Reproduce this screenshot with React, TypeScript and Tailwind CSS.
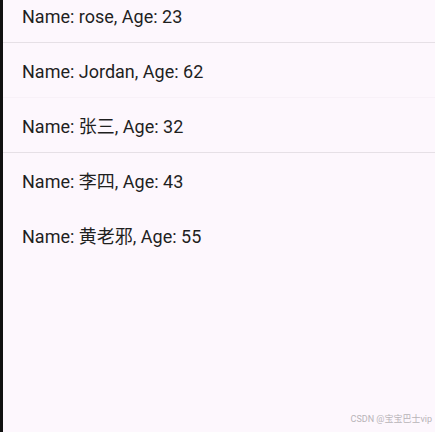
const people = [
  { name: "rose", age: 23, divider: "bg-[#e6e0e6]" },
  { name: "Jordan", age: 62, divider: "bg-[#f8f1f8]" },
  { name: "张三", age: 32, divider: "bg-[#e6e0e6]" },
  { name: "李四", age: 43, divider: "" },
  { name: "黄老邪", age: 55, divider: "" },
];

export default function App() {
  return (
    <div className="flex h-[432px] w-[435px] overflow-hidden bg-[#fdf7fd]">
      <div className="w-[3px] shrink-0 bg-[#111111]" />
      <div className="relative flex-1">
        <div className="-mt-[12px] flex flex-col">
          {people.map((p) => (
            <div key={p.name} className="flex flex-col">
              <div className="flex h-[54px] items-center pl-[19px] pt-[2px] text-[18px] font-normal text-[#1f1f1f] [font-family:Roboto,'Noto_Sans_CJK_SC',sans-serif]">
                Name: {p.name}, Age: {p.age}
              </div>
              <div className={`h-[1px] ${p.divider || "bg-transparent"}`} />
            </div>
          ))}
        </div>
        <div className="absolute bottom-[6px] right-[3px] text-[9px] text-[#b8b4b8] [font-family:Roboto,'Noto_Sans_CJK_SC',sans-serif]">
          CSDN @宝宝巴士vip
        </div>
      </div>
    </div>
  );
}
